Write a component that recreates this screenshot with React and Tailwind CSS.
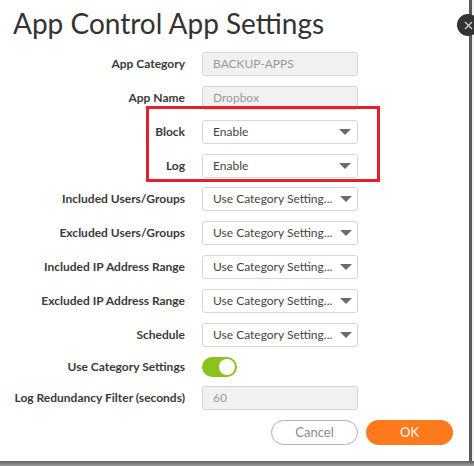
import React from 'react';
import { X } from 'lucide-react';

// Row definitions for the settings form
const ROWS = [
  { label: 'App Category', kind: 'text', value: 'BACKUP-APPS' },
  { label: 'App Name', kind: 'text', value: 'Dropbox' },
  { label: 'Block', kind: 'select', value: 'Enable', group: 'hl' },
  { label: 'Log', kind: 'select', value: 'Enable', group: 'hl' },
  { label: 'Included Users/Groups', kind: 'select', value: 'Use Category Setting...' },
  { label: 'Excluded Users/Groups', kind: 'select', value: 'Use Category Setting...' },
  { label: 'Included IP Address Range', kind: 'select', value: 'Use Category Setting...' },
  { label: 'Excluded IP Address Range', kind: 'select', value: 'Use Category Setting...' },
  { label: 'Schedule', kind: 'select', value: 'Use Category Setting...' },
];

function Label({ children }) {
  return (
    <div className="w-[185px] shrink-0 whitespace-nowrap text-right text-[12px] font-bold text-[#3a3a3a]">{children}</div>
  );
}

function Caret() {
  return (
    <svg width="12" height="6" viewBox="0 0 12 6" className="shrink-0">
      <path d="M0 0 L12 0 L6 6 Z" fill="#6b6b6b" />
    </svg>
  );
}

function Field({ kind, value }) {
  if (kind === 'text') {
    return (
      <div className="flex h-[24px] w-[156px] items-center rounded-[3px] border border-[#d6d6d6] bg-[#f1f1f1] px-[10px] text-[12px] text-[#9a9a9a]">
        {value}
      </div>
    );
  }
  return (
    <div className="flex h-[24px] w-[156px] items-center justify-between gap-[8px] rounded-[3px] border border-[#d6d6d6] bg-white pl-[10px] pr-[6px] text-[12px] text-[#444]">
      <span className="whitespace-nowrap">{value}</span>
      <Caret />
    </div>
  );
}

function Row({ label, kind, value }) {
  return (
    <div className="flex h-[24px] items-center gap-[17px]">
      <Label>{label}</Label>
      <Field kind={kind} value={value} />
    </div>
  );
}

export default function App() {
  const top = ROWS.slice(0, 2);
  const hl = ROWS.filter((r) => r.group === 'hl');
  const rest = ROWS.slice(4);

  return (
    <div className="relative h-[466px] w-[474px] overflow-hidden bg-[#f2f2f2]" style={{ fontFamily: 'Lato, sans-serif' }}>
      {/* dialog panel */}
      <div className="h-[461px] w-[472px] border-r-[3px] border-[#5a5a5a] bg-white">
        <h1 className="pl-[13px] pt-[5px] text-[28px] font-normal leading-[36px] text-[#333]">App Control App Settings</h1>

        <div className="mt-[11px] flex flex-col gap-[10px]">
          {top.map((r) => (
            <Row key={r.label} {...r} />
          ))}
        </div>

        {/* highlighted Block / Log rows */}
        <div className="relative mt-[10px] flex flex-col gap-[10px]">
          <div className="absolute left-[146px] top-[-14px] h-[76px] w-[234px] border-[3px] border-[#e3202b]" />
          {hl.map((r) => (
            <Row key={r.label} {...r} />
          ))}
        </div>

        <div className="mt-[9px] flex flex-col gap-[10px]">
          {rest.map((r) => (
            <Row key={r.label} {...r} />
          ))}
        </div>

        <div className="mt-[10px] flex h-[20px] items-center gap-[17px]">
          <Label>Use Category Settings</Label>
          <div className="flex h-[20px] w-[35px] items-center justify-end rounded-full bg-[#8cc21e] pr-[2px]">
            <div className="h-[16px] w-[16px] rounded-full bg-white" />
          </div>
        </div>

        <div className="mt-[9px]">
          <Row label="Log Redundancy Filter (seconds)" kind="text" value="60" />
        </div>

        <div className="mt-[10px] flex justify-end gap-[8px] pr-[16px]">
          <button className="h-[25px] w-[87px] rounded-full border border-[#b0b0b0] bg-white text-[13px] text-[#8a8a8a]">Cancel</button>
          <button className="h-[25px] w-[87px] rounded-full bg-[#ff7a1c] text-[13px] text-white">OK</button>
        </div>
      </div>

      {/* shadow strip under the dialog */}
      <div className="h-[5px] bg-gradient-to-b from-[#5e5e5e] to-[#a0a0a0]" />

      {/* close button peeking at the corner */}
      <div className="absolute left-[457px] top-[14px] flex h-[22px] w-[22px] items-center justify-center rounded-full bg-[#333]">
        <X size={13} strokeWidth={2} color="#ddd" />
      </div>
    </div>
  );
}
